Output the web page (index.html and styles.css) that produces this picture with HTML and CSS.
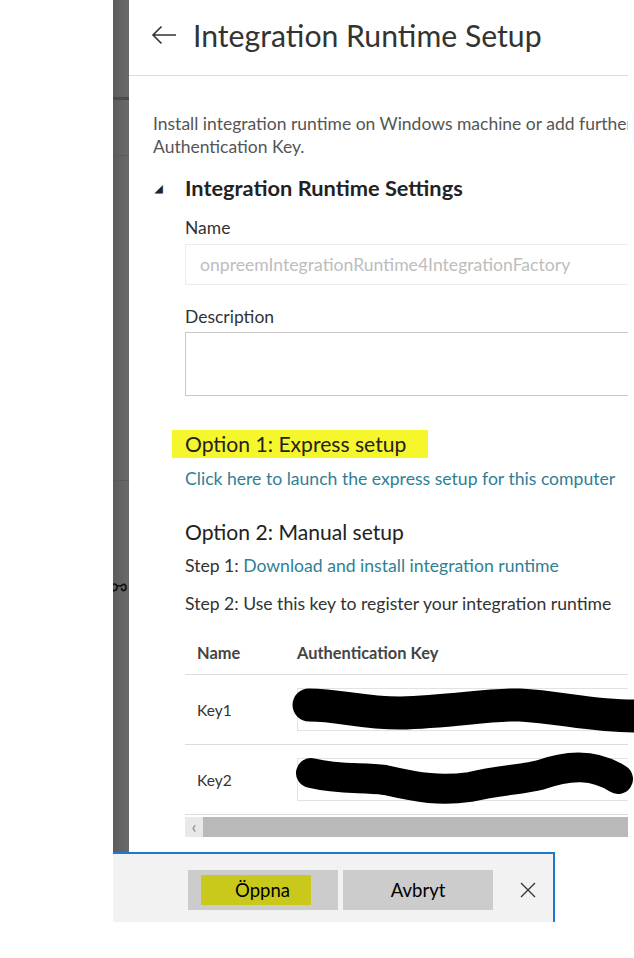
FILE: index.html
```html
<!DOCTYPE html>
<html lang="en">
<head>
  <meta charset="UTF-8" />
  <meta name="viewport" content="width=device-width, initial-scale=1.0" />
  <title>Integration Runtime Setup</title>
  <link rel="stylesheet" href="styles.css">
</head>
<body>
  <div class="screen">
    <!-- ===================== BLADE + LEFT STRIP ===================== -->
    <div class="window">
      <div class="strip">
        <svg class="strip-icon" width="16" height="13" viewBox="0 0 16 13" aria-hidden="true">
          <path d="M1.5 4 C1 1.5 5.5 1 6 4.5 C6.5 9 1.5 10 1.2 6.5 M6 4.5 Q8.5 3 10.5 4.5 M10.5 4.5 C10.5 1.5 15 1.5 15 5.5 C15 9.5 10.5 9.5 10.5 6" fill="none" stroke="#111" stroke-width="1.7"/>
        </svg>
      </div>

      <section class="panel">
        <header class="panel-head">
          <svg class="back" width="26" height="20" viewBox="0 0 26 20" aria-hidden="true">
            <path d="M25 10 H2 M10.5 1.5 L2 10 L10.5 18.5" fill="none" stroke="#333" stroke-width="1.6"/>
          </svg>
          <h1>Integration Runtime Setup</h1>
        </header>

        <div class="panel-body">
          <p class="intro">Install integration runtime on Windows machine or add further nodes using<br>Authentication Key.</p>

          <h2 class="group-title"><span class="caret">&#9698;</span>Integration Runtime Settings</h2>

          <div class="group">
            <label class="field-label">Name</label>
            <div class="text-input is-disabled">onpreemIntegrationRuntime4IntegrationFactory</div>

            <label class="field-label field-label--desc">Description</label>
            <div class="text-area"></div>

            <h3 class="option option--first"><span class="marker">Option 1: Express setup</span></h3>
            <a class="link link--express" href="#">Click here to launch the express setup for this computer</a>

            <h3 class="option option--second">Option 2: Manual setup</h3>
            <p class="step step--one">Step 1: <a class="link" href="#">Download and install integration runtime</a></p>
            <p class="step step--two">Step 2: Use this key to register your integration runtime</p>

            <table class="keys">
              <thead>
                <tr><th class="col-name">Name</th><th>Authentication Key</th></tr>
              </thead>
              <tbody>
                <tr><td class="col-name">Key1</td><td><div class="key-box"></div></td></tr>
                <tr><td class="col-name">Key2</td><td><div class="key-box"></div></td></tr>
              </tbody>
            </table>

            <div class="hscroll">
              <span class="hscroll-btn">&#8249;</span>
              <span class="hscroll-thumb"></span>
            </div>
          </div>
        </div>
      </section>
    </div>

    <!-- ===================== DOWNLOAD PROMPT ===================== -->
    <div class="prompt-bar">
      <button class="prompt-btn"><span class="marker marker--dull">Öppna</span></button>
      <button class="prompt-btn">Avbryt</button>
      <button class="prompt-close" aria-label="Stäng">
        <svg width="16" height="16" viewBox="0 0 16 16"><path d="M1 1 L15 15 M15 1 L1 15" stroke="#333" stroke-width="1.3"/></svg>
      </button>
    </div>

    <!-- redaction scribbles drawn over the keys -->
    <svg class="redactions" width="634" height="958" viewBox="0 0 634 958" aria-hidden="true">
      <path d="M309 705 C340 705 360 713 400 713 C450 712 490 704 520 705 C560 707 590 716 634 716" fill="none" stroke="#000" stroke-width="33" stroke-linecap="round"/>
      <path d="M311 773 C340 780 360 777 385 780 C420 788 440 791 470 787 C500 780 520 780 540 775 C570 764 595 764 618 779" fill="none" stroke="#000" stroke-width="30" stroke-linecap="round"/>
    </svg>
  </div>
</body>
</html>
```

FILE: styles.css
```css
/* --- Reset & base ---------------------------------------------------- */
* { box-sizing: border-box; margin: 0; padding: 0; }
body { font-family: Lato, "Noto Sans", sans-serif; color: #333; background: #fff; }
a { text-decoration: none; }

.screen { position: relative; width: 634px; height: 958px; overflow: hidden; }

/* --- Window with the dark strip ------------------------------------- */
.window { display: flex; height: 852px; padding-left: 113px; }
.strip {
  width: 16px;
  flex: none;
  display: flex;
  align-items: flex-start;
  padding-top: 582px;
  background:
    linear-gradient(#4b4b4b, #4b4b4b) 0 97px / 100% 3px no-repeat,
    linear-gradient(#5a5a5a, #5a5a5a) 0 155px / 100% 1px no-repeat,
    linear-gradient(#5a5a5a, #5a5a5a) 0 480px / 100% 1px no-repeat,
    linear-gradient(90deg, #5c5c5c, #6a6a6a);
  overflow: hidden;
}
.strip-icon { margin-left: -2px; }

.panel { width: 499px; flex: none; overflow: hidden; background: #fff; }

/* --- Header ---------------------------------------------------------- */
.panel-head {
  height: 76px;
  display: flex;
  align-items: center;
  gap: 16px;
  padding: 0 0 6px 22px;
  border-bottom: 1px solid #dcdcdc;
}
.panel-head h1 { font-weight: 400; font-size: 30.2px; color: #333; white-space: nowrap; }

/* --- Body ------------------------------------------------------------ */
.panel-body { padding: 36px 0 0 24px; }
.intro { font-size: 17.5px; line-height: 23px; color: #555; white-space: nowrap; }

.group-title {
  margin-top: 16px;
  font-size: 21.8px;
  line-height: 28px;
  font-weight: 700;
  color: #222;
  display: flex;
  align-items: center;
  white-space: nowrap;
}
.caret { font-size: 10px; width: 32px; padding-left: 2px; color: #222; }

.group { padding-left: 32px; }
.field-label { display: block; margin-top: 15px; font-size: 17.5px; line-height: 22px; color: #333; }
.field-label--desc { margin-top: 21px; }
.text-input {
  margin-top: 5px;
  height: 41px;
  width: 470px;
  border: 1px solid #ececec;
  padding: 0 14px;
  font-size: 17.6px;
  line-height: 39px;
  white-space: nowrap;
}
.is-disabled { color: #bdbdbd; }
.text-area { margin-top: 4px; height: 64px; width: 470px; border: 1px solid #c8c8c8; }

.option { font-weight: 400; font-size: 21.1px; line-height: 28px; color: #222; white-space: nowrap; }
.option--first { margin-top: 34px; }
.option--second { margin-top: 28px; }
.marker { background: #f6f62c; padding: 1px 22px 2px 13px; margin-left: -13px; }
.marker--dull { background: #c9c91c; padding: 4px 21px 4px 34px; margin: 0 0 0 -14px; }

.link { color: #2f7f96; }
.link--express { display: block; margin-top: 10px; font-size: 17.6px; line-height: 22px; white-space: nowrap; }
.step { font-size: 17.6px; line-height: 22px; color: #333; white-space: nowrap; }
.step--one { margin-top: 9px; }
.step--two { margin-top: 16px; }

/* --- Keys table ------------------------------------------------------ */
.keys { margin-top: 16px; width: 470px; border-collapse: collapse; font-size: 15.5px; color: #333; }
.keys th { height: 43px; text-align: left; font-weight: 700; font-size: 16.4px; color: #444; padding: 0; }
.keys th, .keys td { border-bottom: 1px solid #dcdcdc; }
.keys td { height: 70px; padding: 0; }
.keys tbody td { padding-top: 1px; }
.col-name { width: 112px; padding-left: 12px !important; }
.key-box { height: 43px; border: 1px solid #e2e2e2; }

.hscroll { display: flex; height: 20px; margin-top: 2px; width: 470px; }
.hscroll-btn {
  width: 18px;
  background: #e8e8e8;
  color: #888;
  font-size: 18px;
  line-height: 18px;
  text-align: center;
}
.hscroll-thumb { flex: 1; background: #b9b9b9; }

/* --- Download prompt bar -------------------------------------------- */
.prompt-bar {
  margin-left: 113px;
  width: 442px;
  height: 70px;
  display: flex;
  align-items: center;
  gap: 5px;
  padding: 4px 0 0 75px;
  background: #f2f2f2;
  border-top: 2px solid #1f78d1;
  border-right: 2px solid #1f78d1;
}
.prompt-btn {
  width: 150px;
  height: 40px;
  border: none;
  background: #cccccc;
  color: #000;
  font-family: inherit;
  font-size: 18.5px;
}
.prompt-close { margin-left: 22px; border: none; background: none; display: flex; }

.redactions { position: absolute; top: 0; left: 0; pointer-events: none; }
```
